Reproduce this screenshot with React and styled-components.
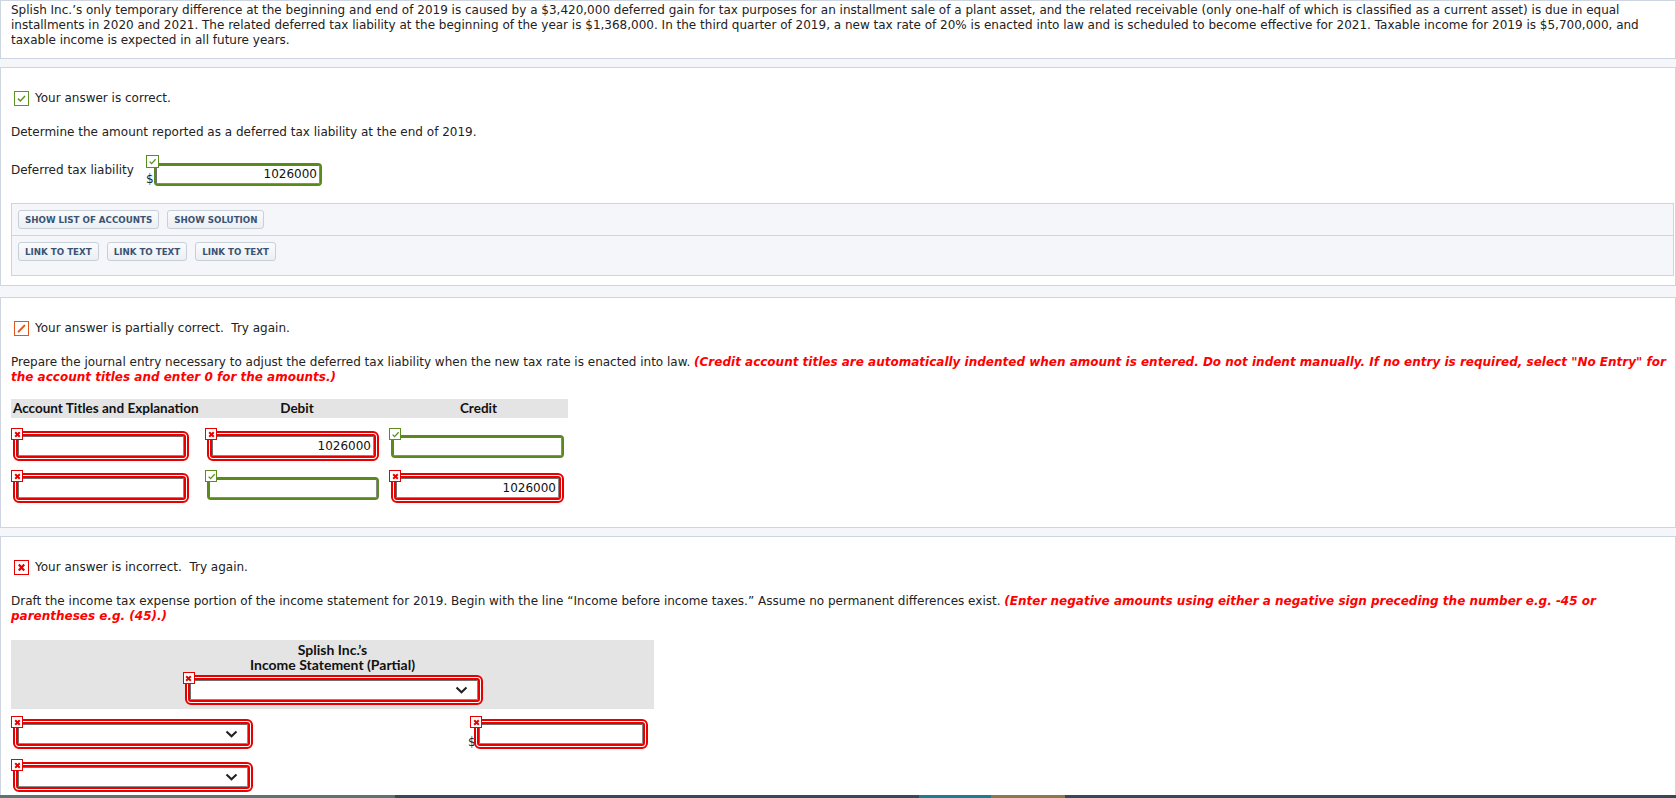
import React from "react";
import styled, { createGlobalStyle, css } from "styled-components";

const GlobalStyle = createGlobalStyle`
  html, body {
    margin: 0;
    padding: 0;
    background: #fff;
  }
  body {
    font-family: "DejaVu Sans", Verdana, sans-serif;
    font-size: 12px;
    line-height: 15px;
    color: #222;
  }
`;

const Page = styled.div`
  height: 798px;
  display: flex;
  flex-direction: column;
  overflow: hidden;
`;

const Stack = styled.main`
  flex: 1;
  min-height: 0;
  overflow: hidden;
  background: #f4f6f9;
  display: flex;
  flex-direction: column;
  gap: 8px;
`;

const Section = styled.section`
  flex-shrink: 0;
  background: #fff;
  border: 1px solid #cdd5e1;
  margin-top: ${(p) => p.$mt || 0}px;
  padding: ${(p) => p.$pt}px 5px ${(p) => p.$pb}px 10px;
`;

const Text = styled.p`
  margin: ${(p) => p.$mt || 0}px 0 0;
`;

const Hint = styled.span`
  color: #ff0000;
  font-weight: bold;
  font-style: italic;
`;

const StatusRow = styled.div`
  display: flex;
  align-items: center;
  gap: 6px;
  height: 16px;
  padding-left: 3px;
`;

const StatusBox = styled.span`
  width: 15px;
  height: 15px;
  box-sizing: border-box;
  border: 1.5px solid ${(p) => p.$color};
  background: #fff;
  display: flex;
  align-items: center;
  justify-content: center;
`;

const statusColor = { ok: "#5c9524", part: "#e0561c", bad: "#e60000" };

function Status({ kind, children }) {
  const c = statusColor[kind];
  return (
    <StatusRow>
      <StatusBox $color={c}>
        <svg width="11" height="11" viewBox="0 0 11 11">
          {kind === "ok" && (
            <path d="M2 5.6 L4.4 8 L9 3" fill="none" stroke={c} strokeWidth="1.5" />
          )}
          {kind === "part" && (
            <path d="M2.6 8.6 L8.4 2.6" fill="none" stroke={c} strokeWidth="2" strokeLinecap="round" />
          )}
          {kind === "bad" && (
            <path d="M2.8 2.5 L8.2 8.5 M8.2 2.5 L2.8 8.5" fill="none" stroke={c} strokeWidth="2.2" />
          )}
        </svg>
      </StatusBox>
      <span>{children}</span>
    </StatusRow>
  );
}

/* small mark on the corner of a field */
const BadgeBox = styled.span`
  position: absolute;
  top: 0;
  left: ${(p) => p.$left || 0}px;
  width: ${(p) => p.$size}px;
  height: ${(p) => p.$size}px;
  box-sizing: border-box;
  border: 1px solid ${(p) => (p.$ok ? "#5b8f1d" : "#e60000")};
  background: #fff;
  display: flex;
  align-items: center;
  justify-content: center;
  z-index: 1;
`;

function Badge({ ok, size = 12, left }) {
  return (
    <BadgeBox $ok={ok} $size={size} $left={left}>
      <svg width="9" height="9" viewBox="0 0 9 9">
        {ok ? (
          <path d="M1.6 4.6 L3.6 6.6 L7.6 2.3" fill="none" stroke="#5b8f1d" strokeWidth="1.3" />
        ) : (
          <path d="M2.2 2.2 L6.8 6.8 M6.8 2.2 L2.2 6.8" fill="none" stroke="#e60000" strokeWidth="2" />
        )}
      </svg>
    </BadgeBox>
  );
}

const Outer = styled.span`
  display: inline-flex;
  box-sizing: border-box;
  width: ${(p) => p.$w}px;
  background: #fff;
  ${(p) =>
    p.$ok
      ? css`
          height: 23px;
          border: 2px solid #5b8a1c;
          border-radius: 4px;
        `
      : css`
          height: 30px;
          border: 2px solid #e60000;
          border-radius: 6px;
          padding: 1px;
        `}
`;

const Inner = styled.span`
  flex: 1;
  display: flex;
  border: 2px solid #e60000;
  border-radius: 3px;
`;

const Box = styled.span`
  flex: 1;
  display: flex;
  align-items: center;
  justify-content: flex-end;
  border: 1px solid #8a8a8a;
  border-top-color: #6f6f6f;
  border-left-color: #6f6f6f;
  padding: 0 ${(p) => (p.$select ? 9 : 2)}px 0 3px;
  font-size: 12px;
  color: #111;
`;

function Chevron() {
  return (
    <svg width="13" height="8" viewBox="0 0 13 8">
      <polyline points="1.5,1.5 6.5,6.3 11.5,1.5" fill="none" stroke="#222" strokeWidth="2.1" />
    </svg>
  );
}

function Field({ ok, w, value, select }) {
  const content = <Box $select={select}>{select ? <Chevron /> : value}</Box>;
  return (
    <Outer $ok={ok} $w={w}>
      {ok ? content : <Inner>{content}</Inner>}
    </Outer>
  );
}

const Slot = styled.span`
  position: relative;
  display: inline-flex;
  align-items: center;
  padding: 3px 0 0 2px;
  min-height: 30px;
`;

const MoneySlot = styled.span`
  position: relative;
  display: inline-flex;
  align-items: flex-end;
  padding-top: ${(p) => p.$pt}px;
`;

const Dollar = styled.span`
  width: ${(p) => p.$w}px;
  line-height: 14px;
  overflow: visible;
  white-space: nowrap;
`;

const FieldRow = styled.div`
  display: flex;
  align-items: flex-start;
  margin-top: 15px;
`;

const Label = styled.span`
  width: 135px;
  padding-top: 8px;
`;

/* buttons */
const Panel = styled.div`
  margin: 17px -4px 0 0;
  border: 1px solid #ccd5df;
  background: #f4f6f9;
`;

const PanelRow = styled.div`
  display: flex;
  gap: 8px;
  padding: 6px 6px ${(p) => p.$pb}px;
  border-bottom: ${(p) => (p.$divider ? "1px solid #ccd5df" : "none")};
`;

const Button = styled.button`
  height: 19px;
  padding: 0 6px;
  border: 1px solid #c7cfd9;
  border-radius: 3px;
  background: linear-gradient(#fafbfc, #eceff3);
  font-family: "DejaVu Sans", Verdana, sans-serif;
  font-size: 8.7px;
  font-weight: bold;
  color: #3a5375;
  cursor: pointer;
`;

/* journal table */
const Journal = styled.div`
  margin-top: 14px;
  width: 557px;
  display: grid;
  grid-template-columns: 194px 184px 179px;
  row-gap: 9px;
`;

const HeadCell = styled.div`
  height: 19px;
  margin-bottom: 1px;
  background: #e4e4e4;
  display: flex;
  align-items: center;
  justify-content: ${(p) => (p.$left ? "flex-start" : "center")};
  padding-left: ${(p) => (p.$left ? 2 : 0)}px;
  font-family: Lato, "Open Sans", sans-serif;
  font-weight: bold;
  font-size: 13.5px;
  color: #111;
`;

/* income statement */
const Statement = styled.div`
  margin-top: 16px;
  width: 643px;
  background: #e4e4e4;
  padding: 2px 0 4px;
  display: flex;
  flex-direction: column;
  align-items: center;
`;

const Title = styled.div`
  font-family: Lato, "Open Sans", sans-serif;
  font-weight: bold;
  font-size: 14px;
  line-height: 15px;
  color: #111;
  text-align: center;
`;

const StatementRow = styled.div`
  width: 637px;
  display: flex;
  justify-content: space-between;
  align-items: flex-start;
  margin-top: ${(p) => p.$mt}px;
`;

/* strip at the foot of the window */
const Strip = styled.div`
  height: 3px;
  display: flex;
  flex-shrink: 0;
`;

const Segment = styled.span`
  width: ${(p) => (p.$w ? `${p.$w}px` : "auto")};
  flex: ${(p) => (p.$w ? "none" : 1)};
  background: ${(p) => p.$c};
`;

export default function App() {
  return (
    <Page>
      <GlobalStyle />
      <Stack>
        <Section $pt={2} $pb={10}>
          <Text>
            Splish Inc.’s only temporary difference at the beginning and end of 2019 is caused by a
            $3,420,000 deferred gain for tax purposes for an installment sale of a plant asset, and
            the related receivable (only one-half of which is classified as a current asset) is due
            in equal installments in 2020 and 2021. The related deferred tax liability at the
            beginning of the year is $1,368,000. In the third quarter of 2019, a new tax rate of 20%
            is enacted into law and is scheduled to become effective for 2021. Taxable income for
            2019 is $5,700,000, and taxable income is expected in all future years.
          </Text>
        </Section>

        <Section $pt={22} $pb={9}>
          <Status kind="ok">Your answer is correct.</Status>
          <Text $mt={19}>
            Determine the amount reported as a deferred tax liability at the end of 2019.
          </Text>
          <FieldRow>
            <Label>Deferred tax liability</Label>
            <MoneySlot $pt={8}>
              <Badge ok size={13} />
              <Dollar $w={8}>$</Dollar>
              <Field ok w={168} value="1026000" />
            </MoneySlot>
          </FieldRow>
          <Panel>
            <PanelRow $divider $pb={6}>
              <Button>SHOW LIST OF ACCOUNTS</Button>
              <Button>SHOW SOLUTION</Button>
            </PanelRow>
            <PanelRow $pb={14}>
              <Button>LINK TO TEXT</Button>
              <Button>LINK TO TEXT</Button>
              <Button>LINK TO TEXT</Button>
            </PanelRow>
          </Panel>
        </Section>

        <Section $mt={3} $pt={22} $pb={24}>
          <Status kind="part">Your answer is partially correct.&nbsp; Try again.</Status>
          <Text $mt={19}>
            Prepare the journal entry necessary to adjust the deferred tax liability when the new tax
            rate is enacted into law.{" "}
            <Hint>
              (Credit account titles are automatically indented when amount is entered. Do not
              indent manually. If no entry is required, select "No Entry" for the account titles and
              enter 0 for the amounts.)
            </Hint>
          </Text>
          <Journal>
            <HeadCell $left>Account Titles and Explanation</HeadCell>
            <HeadCell>Debit</HeadCell>
            <HeadCell>Credit</HeadCell>

            <Slot>
              <Badge />
              <Field w={176} />
            </Slot>
            <Slot>
              <Badge />
              <Field w={172} value="1026000" />
            </Slot>
            <Slot>
              <Badge ok />
              <Field ok w={173} />
            </Slot>

            <Slot>
              <Badge />
              <Field w={176} />
            </Slot>
            <Slot>
              <Badge ok />
              <Field ok w={172} />
            </Slot>
            <Slot>
              <Badge />
              <Field w={173} value="1026000" />
            </Slot>
          </Journal>
        </Section>

        <Section $pt={22} $pb={20}>
          <Status kind="bad">Your answer is incorrect.&nbsp; Try again.</Status>
          <Text $mt={19}>
            Draft the income tax expense portion of the income statement for 2019. Begin with the
            line “Income before income taxes.” Assume no permanent differences exist.{" "}
            <Hint>
              (Enter negative amounts using either a negative sign preceding the number e.g. -45 or
              parentheses e.g. (45).)
            </Hint>
          </Text>
          <Statement>
            <Title>Splish Inc.’s</Title>
            <Title>Income Statement (Partial)</Title>
            <Slot>
              <Badge />
              <Field w={298} select />
            </Slot>
          </Statement>
          <StatementRow $mt={7}>
            <Slot>
              <Badge />
              <Field w={240} select />
            </Slot>
            <MoneySlot $pt={3}>
              <Badge left={2} />
              <Dollar $w={6}>$</Dollar>
              <Field w={174} />
            </MoneySlot>
          </StatementRow>
          <StatementRow $mt={10}>
            <Slot>
              <Badge />
              <Field w={240} select />
            </Slot>
          </StatementRow>
        </Section>
      </Stack>
      <Strip>
        <Segment $w={395} $c="#5f7272" />
        <Segment $w={524} $c="#344a58" />
        <Segment $w={72} $c="#1b7e8c" />
        <Segment $w={74} $c="#8a7a4a" />
        <Segment $c="#344a58" />
      </Strip>
    </Page>
  );
}
